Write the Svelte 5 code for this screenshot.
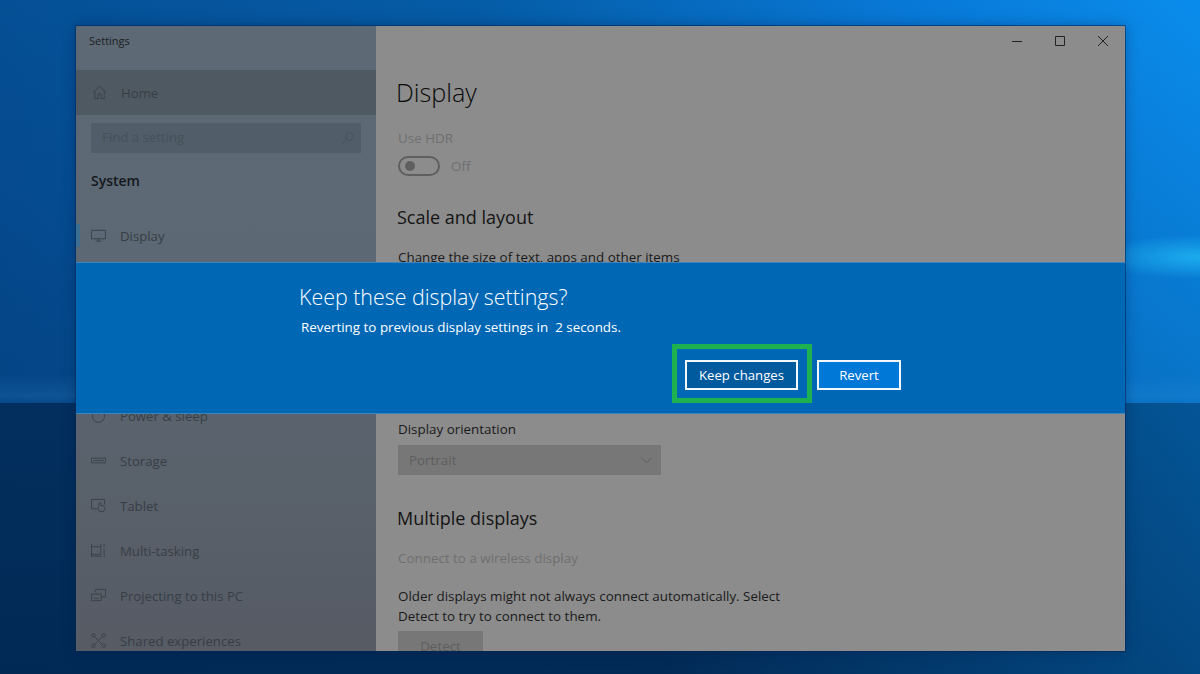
<script>
  // sidebar rows, icons are drawn below by key
  const navItems = [
    { key: "display", label: "Display", active: true },
    { key: "sound", label: "Sound" },
    { key: "notify", label: "Notifications & actions" },
    { key: "focus", label: "Focus assist" },
    { key: "power", label: "Power & sleep" },
    { key: "storage", label: "Storage" },
    { key: "tablet", label: "Tablet" },
    { key: "multi", label: "Multi-tasking" },
    { key: "project", label: "Projecting to this PC" },
    { key: "shared", label: "Shared experiences" },
  ];
  let seconds = 2;
</script>

<div class="desktop">
  <div class="sky"></div>
  <div class="ground"></div>

  <div class="window">
    <aside class="sidebar">
      <div class="apptitle">Settings</div>
      <div class="home">
        <svg class="icon" viewBox="0 0 16 16">
          <path d="M1 8 8 1.5 15 8M3 6.5V14.5H6.5V9.5H9.5V14.5H13V6.5" />
        </svg>
        <span>Home</span>
      </div>
      <div class="search">
        <span>Find a setting</span>
        <svg viewBox="0 0 14 14">
          <circle cx="8.5" cy="5.5" r="4" />
          <path d="M5.5 8.5 1 13" />
        </svg>
      </div>
      <div class="group">System</div>
      <nav>
        {#each navItems as item}
          <div class="navitem" class:active={item.active}>
            <svg class="icon" viewBox="0 0 16 16">
              {#if item.key === "display"}
                <path d="M.5 2.5H15.5V11.5H.5ZM5 14H11M8 11.5V14" />
              {:else if item.key === "sound"}
                <path d="M1 6H4L8 2.5V13.5L4 10H1ZM11 5.5Q13 8 11 10.5" />
              {:else if item.key === "notify"}
                <path d="M1 2.5H15V11.5H6L3 14.5V11.5H1Z" />
              {:else if item.key === "focus"}
                <path d="M12 10.5A6 6 0 1 1 6 2.5 5 5 0 0 0 12 10.5Z" />
              {:else if item.key === "power"}
                <path d="M5 3A6.5 6.5 0 1 0 11 3M8 1V7" />
              {:else if item.key === "storage"}
                <path d="M.5 5.5H15.5V10.5H.5ZM2.5 8H13.5" />
              {:else if item.key === "tablet"}
                <path d="M7 11.5H.5V1.5H14.5V7M9 14.5 7.5 11.5 8.5 8V5.5H10.5V8H13L15 10.5 13.5 14.5Z" />
              {:else if item.key === "multi"}
                <path d="M.5 1V15M.5 4H10.5V12H.5M.5 14H10.5M10.5 1V3M10.5 13V15M14 1V4M14 6V15" />
              {:else if item.key === "project"}
                <path d="M4.5 4.5V1.5H15.5V9.5H11M.5 6.5H11V13.5H.5ZM3 11H8" />
              {:else}
                <circle cx="2.5" cy="2.5" r="1.8" />
                <circle cx="13.5" cy="2.5" r="1.8" />
                <circle cx="2.5" cy="13.5" r="1.8" />
                <circle cx="13.5" cy="13.5" r="1.8" />
                <path d="M4 4 12 12M12 4 4 12" />
              {/if}
            </svg>
            <span>{item.label}</span>
          </div>
        {/each}
      </nav>
    </aside>

    <main class="content">
      <div class="winbtns">
        <svg viewBox="0 0 10 10"><path d="M0 5.5H10" /></svg>
        <svg viewBox="0 0 10 10"><path d="M.5.5H9.5V9.5H.5Z" /></svg>
        <svg viewBox="0 0 10 10"><path d="M0 0 10 10M10 0 0 10" /></svg>
      </div>
      <h1>Display</h1>
      <div class="muted hdr">Use HDR</div>
      <div class="toggle">
        <span class="track"><span class="knob"></span></span>
        <span class="muted">Off</span>
      </div>
      <h2 class="scale">Scale and layout</h2>
      <p class="change">Change the size of text, apps and other items</p>
      <p class="orient">Display orientation</p>
      <div class="select">
        <span>Portrait</span>
        <svg viewBox="0 0 12 7"><path d="M.5.5 6 6 11.5.5" /></svg>
      </div>
      <h2 class="multiple">Multiple displays</h2>
      <div class="muted wireless">Connect to a wireless display</div>
      <p class="older">Older displays might not always connect automatically. Select Detect to try to connect to them.</p>
      <div class="detect">Detect</div>
    </main>

    <div class="banner">
      <div class="bannerbody">
        <div class="bannertitle">Keep these display settings?</div>
        <div class="bannertext">Reverting to previous display settings in &nbsp;{seconds} seconds.</div>
        <div class="actions">
          <div class="highlight"><button class="keep">Keep changes</button></div>
          <button class="revert">Revert</button>
        </div>
      </div>
    </div>
  </div>
</div>

<style>
  :global(body) {
    margin: 0;
    font-family: "Open Sans", "Noto Sans", sans-serif;
  }
  .desktop {
    position: relative;
    width: 1200px;
    height: 674px;
    overflow: hidden;
    display: flex;
    flex-direction: column;
  }
  .sky {
    height: 403px;
    flex: none;
    background:
      radial-gradient(ellipse 110px 22px at 1200px 257px, rgba(40, 205, 255, 0.6), rgba(40, 205, 255, 0)),
      linear-gradient(180deg, rgba(60, 150, 215, 0) 375px, rgba(60, 150, 215, 0.18) 396px, rgba(60, 150, 215, 0.05) 403px),
      linear-gradient(180deg, rgba(0, 30, 70, 0) 0, rgba(0, 30, 70, 0.22) 403px),
      linear-gradient(90deg, #054f96 0%, #055ca6 40%, #0878d6 75%, #0a8cec 100%);
  }
  .ground {
    flex: 1;
    background:
      linear-gradient(180deg, rgba(5, 80, 150, 0) 0%, rgba(0, 20, 50, 0.2) 100%),
      linear-gradient(90deg, #022f5e 0%, #02305f 55%, #045596 100%);
  }
  .window {
    position: absolute;
    left: 76px;
    top: 26px;
    width: 1049px;
    height: 625px;
    display: flex;
    overflow: hidden;
    box-shadow: 0 0 0 1px rgba(0, 40, 90, 0.55), 0 0 12px rgba(0, 20, 60, 0.35);
  }
  .sidebar {
    width: 300px;
    flex: none;
    box-sizing: border-box;
    background: linear-gradient(180deg, #5d6a75 0%, #5c6873 40%, #565b64 100%);
    color: #383e46;
    font-size: 13.2px;
  }
  .apptitle {
    height: 44px;
    box-sizing: border-box;
    padding: 7px 0 0 13px;
    font-size: 11px;
    line-height: 16px;
    color: #1c2024;
  }
  .icon {
    width: 15px;
    height: 15px;
    flex: none;
    fill: none;
    stroke: #3a4149;
    stroke-width: 1;
  }
  .home {
    height: 45px;
    display: flex;
    align-items: center;
    gap: 14px;
    padding-left: 16px;
    background: #4f5962;
  }
  .search {
    height: 30px;
    margin: 8px 15px 0;
    display: flex;
    align-items: center;
    justify-content: space-between;
    padding: 0 6px 0 11px;
    background: #515d68;
    color: #46515b;
  }
  .search span {
    margin-top: -2px;
  }
  .search svg {
    width: 14px;
    height: 14px;
    fill: none;
    stroke: #46515b;
  }
  .group {
    margin: 18px 0 0 15px;
    height: 20px;
    line-height: 20px;
    font-size: 14px;
    font-weight: 600;
    color: #14181c;
  }
  nav {
    margin-top: 22px;
  }
  .navitem {
    position: relative;
    height: 45px;
    display: flex;
    align-items: center;
    gap: 14px;
    padding-left: 15px;
  }
  .navitem.active::before {
    content: "";
    position: absolute;
    left: 0;
    top: 11px;
    width: 4px;
    height: 23px;
    background: #3d6e92;
  }
  .content {
    position: relative;
    flex: 1;
    padding: 0 22px;
    background: #8c8c8c;
    color: #1a1a1a;
    font-size: 13.4px;
    line-height: 20px;
  }
  .winbtns {
    position: absolute;
    right: 17px;
    top: 10px;
    display: flex;
    gap: 33px;
  }
  .winbtns svg {
    width: 10px;
    height: 10px;
    fill: none;
    stroke: #222;
    stroke-width: 1;
  }
  h1 {
    margin: 45px 0 0 -2px;
    font-size: 25.2px;
    line-height: 42px;
    font-weight: 300;
    color: #0a0a0a;
  }
  h2 {
    margin: 0 0 0 -1px;
    font-size: 18px;
    line-height: 26px;
    font-weight: 400;
    color: #141414;
  }
  p {
    margin: 0;
  }
  .muted {
    color: #6f6f6f;
  }
  .hdr {
    margin-top: 15px;
  }
  .toggle {
    margin-top: 8px;
    display: flex;
    align-items: center;
    gap: 11px;
    height: 20px;
  }
  .track {
    height: 16px;
    border: 2px solid #5f5f5f;
    border-radius: 10px;
    display: flex;
    align-items: center;
    padding-left: 5px;
    box-sizing: content-box;
    width: 33px;
  }
  .knob {
    width: 10px;
    height: 10px;
    border-radius: 50%;
    background: #5f5f5f;
  }
  .scale {
    margin-top: 28px;
  }
  .change {
    margin-top: 17px;
  }
  .orient {
    margin-top: 152px;
  }
  .select {
    margin-top: 6px;
    width: 263px;
    height: 30px;
    box-sizing: border-box;
    display: flex;
    align-items: center;
    justify-content: space-between;
    padding: 0 9px 0 11px;
    background: #777777;
    color: #5e5e5e;
  }
  .select svg {
    width: 11px;
    height: 7px;
    fill: none;
    stroke: #5e5e5e;
  }
  .multiple {
    margin-top: 30px;
  }
  .wireless {
    margin-top: 17px;
  }
  .older {
    margin-top: 18px;
    width: 400px;
    line-height: 20px;
  }
  .detect {
    margin-top: 5px;
    width: 85px;
    height: 30px;
    line-height: 30px;
    text-align: center;
    background: #777777;
    color: #5e5e5e;
  }
  .banner {
    position: absolute;
    left: 0;
    right: 0;
    top: 237px;
    height: 150px;
    box-sizing: border-box;
    background: #0067b5;
    color: #fff;
    box-shadow: 0 -1px 0 #3d86bd, 0 1px 0 #3d86bd;
  }
  .bannerbody {
    width: 602px;
    margin-left: 223px;
    padding-top: 19px;
  }
  .bannertitle {
    font-size: 21.4px;
    line-height: 29px;
    font-weight: 300;
  }
  .bannertext {
    margin: 6px 0 0 2px;
    font-size: 13.4px;
    line-height: 20px;
  }
  .actions {
    display: flex;
    justify-content: flex-end;
    align-items: center;
    gap: 5px;
    margin-top: 7px;
  }
  .highlight {
    border: 5px solid #1db14f;
    padding: 11px 9px 8px 8px;
  }
  button {
    display: block;
    box-sizing: border-box;
    height: 30px;
    border: 2px solid #f2f8fc;
    color: #fff;
    font-family: inherit;
    font-size: 13.2px;
    padding: 0;
  }
  .keep {
    width: 113px;
    background: #005a9e;
  }
  .revert {
    width: 84px;
    background: #0078d7;
    margin-top: 3px;
  }
</style>
